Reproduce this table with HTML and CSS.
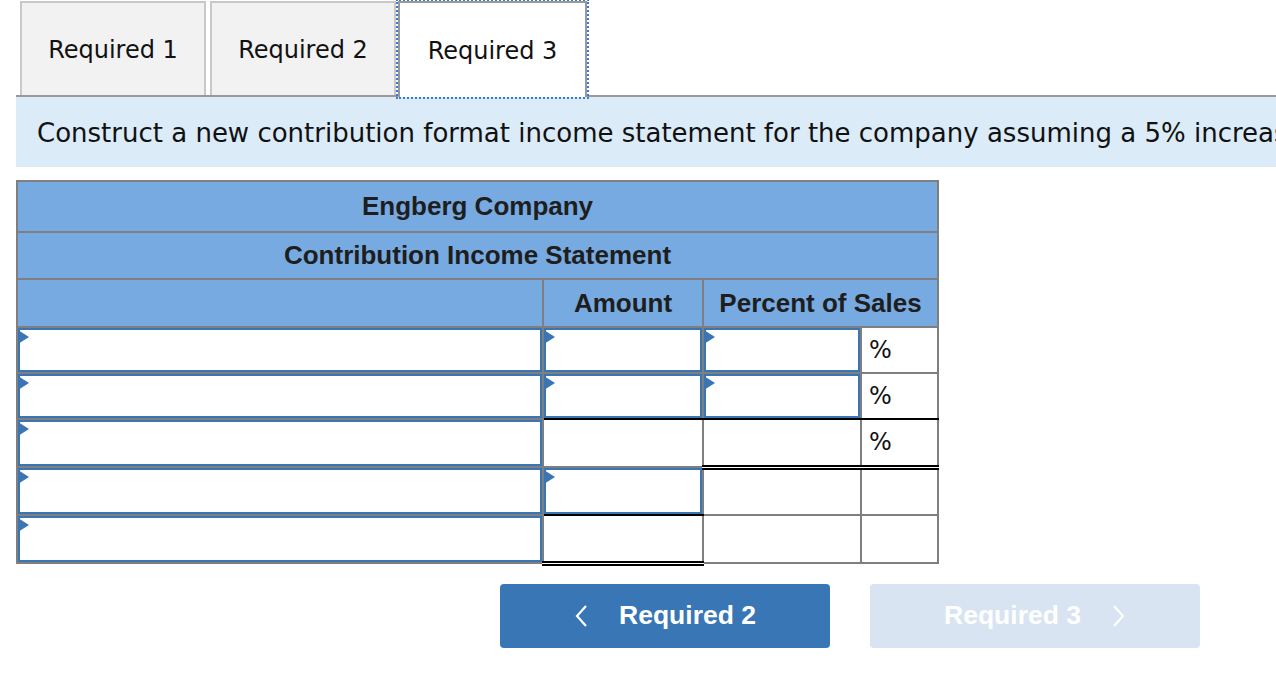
FILE: index.html
```html
<!DOCTYPE html>
<html lang="en">
<head>
    <meta charset="UTF-8">
    <title>Required 3</title>
    <link rel="stylesheet" href="styles.css">
</head>
<body>
    <div class="page">
        <div class="tabs">
            <div class="tab">Required 1</div>
            <div class="tab">Required 2</div>
            <div class="tab active">Required 3</div>
        </div>

        <div class="instructions">Construct a new contribution format income statement for the company assuming a 5% increase in sales.</div>

        <table class="statement">
            <colgroup>
                <col class="col-label">
                <col class="col-amount">
                <col class="col-pct">
                <col class="col-sign">
            </colgroup>
            <tr class="title-row company">
                <td colspan="4">Engberg Company</td>
            </tr>
            <tr class="title-row">
                <td colspan="4">Contribution Income Statement</td>
            </tr>
            <tr class="head-row">
                <td></td>
                <td>Amount</td>
                <td colspan="2">Percent of Sales</td>
            </tr>
            <tr>
                <td><div class="field"><input type="text"></div></td>
                <td><div class="field"><input type="text"></div></td>
                <td><div class="field"><input type="text"></div></td>
                <td class="sign">%</td>
            </tr>
            <tr>
                <td><div class="field"><input type="text"></div></td>
                <td class="total"><div class="field"><input type="text"></div></td>
                <td class="total"><div class="field"><input type="text"></div></td>
                <td class="sign total">%</td>
            </tr>
            <tr class="tall">
                <td><div class="field"><input type="text"></div></td>
                <td class="top-line"></td>
                <td class="top-line grand"></td>
                <td class="sign top-line grand">%</td>
            </tr>
            <tr class="tall">
                <td><div class="field"><input type="text"></div></td>
                <td class="total"><div class="field"><input type="text"></div></td>
                <td></td>
                <td></td>
            </tr>
            <tr class="tall">
                <td><div class="field"><input type="text"></div></td>
                <td class="top-line grand"></td>
                <td></td>
                <td></td>
            </tr>
        </table>

        <div class="nav">
            <button class="nav-btn">
                <svg width="14" height="24" viewBox="0 0 14 24"><polyline points="12,2 3,12 12,22" fill="none" stroke="#fff" stroke-width="2.2"/></svg>
                <span>Required 2</span>
            </button>
            <button class="nav-btn disabled">
                <span>Required 3</span>
                <svg width="14" height="24" viewBox="0 0 14 24"><polyline points="2,2 11,12 2,22" fill="none" stroke="#fff" stroke-width="2.2"/></svg>
            </button>
        </div>
    </div>
</body>
</html>
```

FILE: styles.css
```css
:root {
    --tab-border: #c8c8c8;
    --line-gray: #7f7f7f;
    --head-blue: #77aae0;
    --field-blue: #3a75b6;
    --btn-blue: #3876b6;
    --btn-off: #d8e4f1;
}

* {
    box-sizing: border-box;
}

body {
    margin: 0;
    font-family: "DejaVu Sans", Verdana, sans-serif;
    color: #111;
    background: #fff;
    overflow: hidden;
}

.page {
    padding: 1px 0 0 16px;
}

/* Tabs */
.tabs {
    display: flex;
    padding-left: 4px;
    border-bottom: 2px solid #999;
    height: 96px;
}

.tab {
    width: 186px;
    height: 94px;
    margin-right: 4px;
    padding-top: 2px;
    background: #f2f2f2;
    border: 2px solid var(--tab-border);
    border-bottom: none;
    display: flex;
    align-items: center;
    justify-content: center;
    font-size: 24px;
    color: #111;
}

.tab.active {
    width: 189px;
    margin-left: -2px;
    height: 96px;
    background: #fff;
    border-color: #999;
    outline: 2px dotted #3b7cc9;
    outline-offset: 0;
    position: relative;
}

/* long prompt is clipped at the window edge, as in the original */
.instructions {
    height: 70px;
    line-height: 72px;
    padding-left: 21px;
    background: #dbebf7;
    font-size: 26px;
    white-space: nowrap;
    overflow: hidden;
    color: #111;
}

/* Statement table */
.statement {
    margin-top: 13px;
    border-collapse: collapse;
    border: 2px solid var(--line-gray);
    width: 921px;
    table-layout: fixed;
}

.col-label { width: 526px; }
.col-amount { width: 160px; }
.col-pct { width: 158px; }
.col-sign { width: 77px; }

.statement td {
    border: 2px solid var(--line-gray);
    padding: 0;
    height: 46px;
}

.statement .tall td {
    height: 48px;
}

.title-row td,
.head-row td {
    background: var(--head-blue);
    text-align: center;
    font-family: "Liberation Sans", Arial, sans-serif;
    font-weight: bold;
    font-size: 26px;
    color: #1e1e1e;
}

.title-row td {
    height: 47px;
}

.title-row.company td {
    height: 51px;
}

.head-row td {
    height: 48px;
}

.statement td.sign {
    padding-left: 7px;
    font-size: 24px;
    vertical-align: middle;
}

.statement td.total {
    border-bottom: 2px solid #000;
}

.statement td.top-line {
    border-top: 2px solid #000;
}

.statement td.grand {
    border-bottom: 5px double #000;
}

.field {
    position: relative;
    height: 44px;
}

.tall .field {
    height: 46px;
}

.field input {
    display: block;
    width: 100%;
    height: 100%;
    margin: 0;
    border: 2px solid var(--field-blue);
    background: #fff;
    font-size: 18px;
}

.field::before {
    content: "";
    position: absolute;
    left: 0;
    top: 2px;
    border-left: 11px solid var(--field-blue);
    border-top: 7px solid transparent;
    border-bottom: 7px solid transparent;
}

/* Bottom navigation */
.nav {
    display: flex;
    gap: 40px;
    margin-top: 18px;
    padding-left: 484px;
}

.nav-btn {
    width: 330px;
    height: 64px;
    border: none;
    border-radius: 4px;
    background: var(--btn-blue);
    color: #fff;
    display: flex;
    align-items: center;
    justify-content: center;
    gap: 31px;
    font-family: "Liberation Sans", Arial, sans-serif;
    font-weight: bold;
    font-size: 26.5px;
    cursor: pointer;
}

.nav-btn.disabled {
    background: var(--btn-off);
    cursor: default;
}
```
